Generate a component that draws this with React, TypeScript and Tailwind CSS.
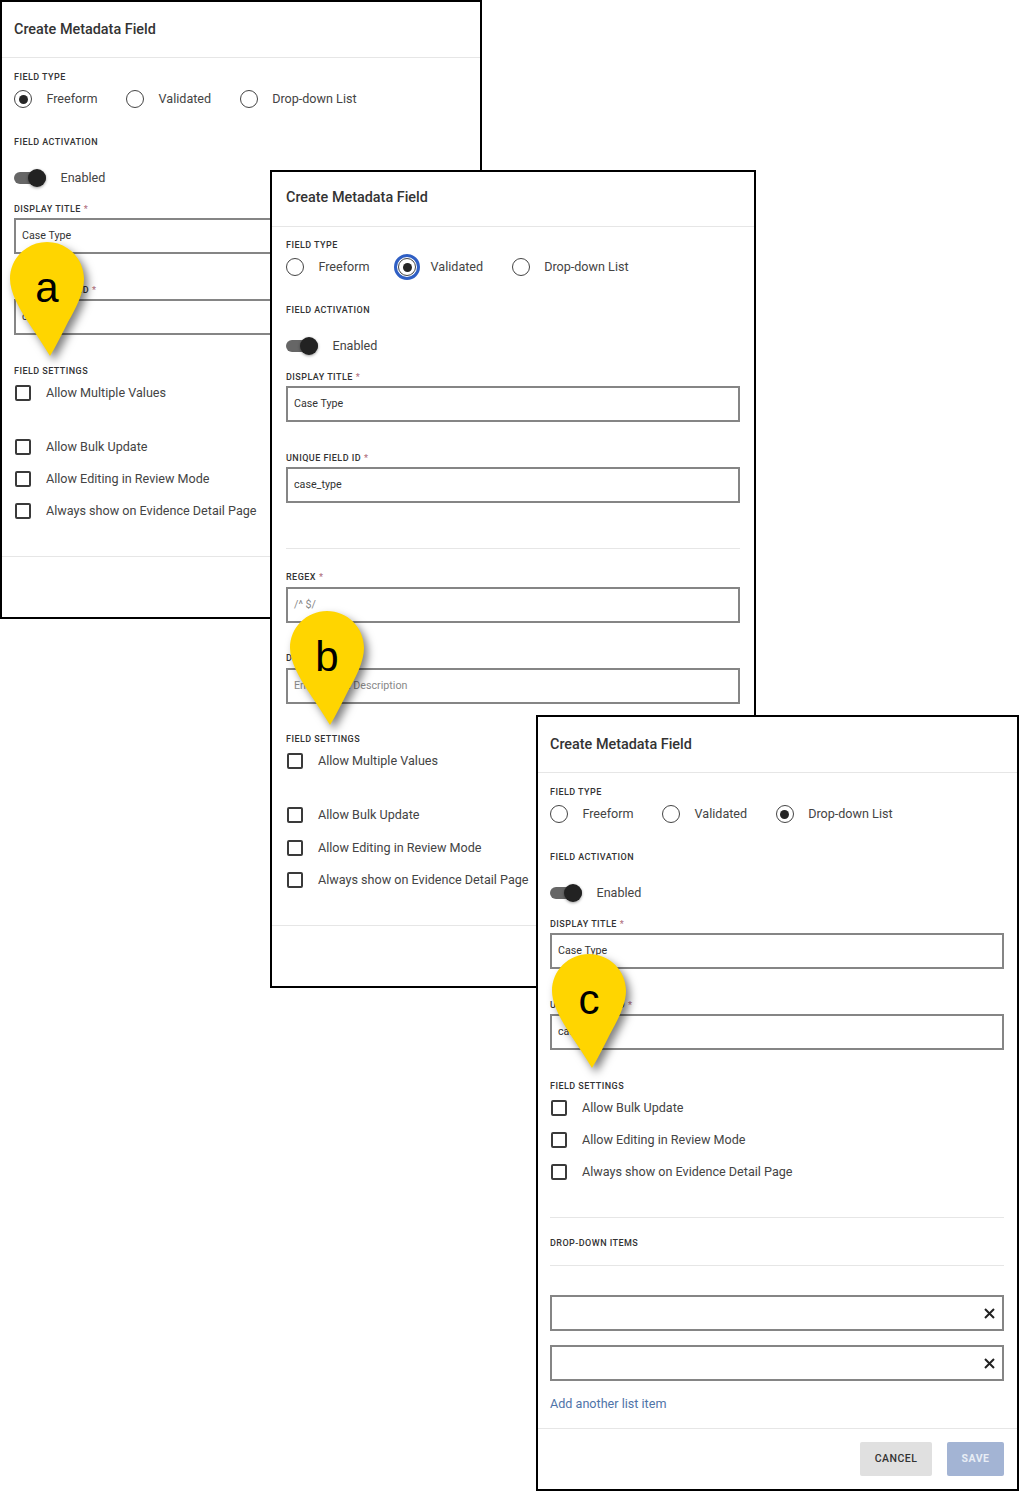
import React from "react";

function Label({ text, req, className = "" }: { text: string; req?: boolean; className?: string }) {
  return (
    <div className={`h-3 flex items-center text-[9px] leading-3 font-medium tracking-[0.45px] text-[#333] uppercase ${className}`}>
      {text}
      {req && <span className="ml-[3px] text-[#b0707e]">*</span>}
    </div>
  );
}

function Radio({ label, checked, focus }: { label: string; checked?: boolean; focus?: boolean }) {
  return (
    <div className="flex items-center h-6">
      <span
        className={`w-[18px] h-[18px] rounded-full border-[1.5px] border-[#444] flex items-center justify-center shrink-0 ${focus ? "outline-[3px] outline-[#2f5fc4] outline-offset-[1px]" : ""}`}
      >
        {checked && <span className="w-[9px] h-[9px] rounded-full bg-[#262626]" />}
      </span>
      <span className="ml-[14.4px] text-[12.6px] text-[#444]">{label}</span>
    </div>
  );
}

function Check({ label, className = "" }: { label: string; className?: string }) {
  return (
    <div className={`flex items-center h-6 ${className}`}>
      <span className="ml-px w-4 h-4 rounded-[2px] border-2 border-[#3a3a3a] shrink-0" />
      <span className="ml-[15px] text-[12.6px] text-[#444] whitespace-nowrap">{label}</span>
    </div>
  );
}

function Input({ value, placeholder, className = "", icon }: { value?: string; placeholder?: string; className?: string; icon?: boolean }) {
  return (
    <div className={`h-9 border-2 border-[#858585] flex items-center justify-between pl-[6px] pr-[7px] text-[10.7px] ${value ? "text-[#333]" : "text-[#888]"} ${className}`}>
      <span>{value ?? placeholder}</span>
      {icon && (
        <svg width="11" height="11" viewBox="0 0 11 11" fill="none" stroke="#222" strokeWidth="2">
          <path d="M1 1 L10 10 M10 1 L1 10" />
        </svg>
      )}
    </div>
  );
}

function Top({ headerClass, labelClass, focus, selected }: { headerClass: string; labelClass: string; focus?: boolean; selected: number }) {
  return (
    <>
      <div className={`flex items-center text-[14.4px] font-medium text-[#333] border-b border-[#e6e6e6] ${headerClass}`}>
        Create Metadata Field
      </div>
      <Label text="Field Type" className={labelClass} />
      <div className="flex gap-[28.6px] mt-1">
        <Radio label="Freeform" checked={selected === 0} />
        <Radio label="Validated" checked={selected === 1} focus={focus} />
        <Radio label="Drop-down List" checked={selected === 2} />
      </div>
      <Label text="Field Activation" className="mt-[25px]" />
      <div className="flex items-center h-6 mt-[18px]">
        <div className="relative w-[32px] h-3 rounded-full bg-[#666] shrink-0">
          <span className="absolute right-0 -top-[3px] w-[18px] h-[18px] rounded-full bg-[#222] shadow-[0_1px_3px_rgba(0,0,0,0.4)]" />
        </div>
        <span className="ml-[14.5px] text-[12.6px] text-[#444]">Enabled</span>
      </div>
      <Label text="Display Title" req className="mt-[13px]" />
      <Input value="Case Type" className="mt-[3px]" />
      <Label text="Unique Field ID" req className="mt-[30px]" />
      <Input value="case_type" className="mt-[3px]" />
    </>
  );
}

function Pin({ letter, left, top }: { letter: string; left: string; top: string }) {
  return (
    <div className={`absolute w-[74px] h-[114px] ${left} ${top}`}>
      <svg width="74" height="114" viewBox="0 0 74 114" className="drop-shadow-[4px_5px_4px_rgba(0,0,0,0.5)] overflow-visible">
        <path d="M37 0 C57.5 0 74 16.5 74 37 C74 50 66 66 58 80 C52 92 46 104 40 114 C34 104 26 92 18 80 C9 66 0 50 0 37 C0 16.5 16.5 0 37 0 Z" fill="#ffd500" />
      </svg>
      <span className="absolute inset-x-0 top-[25px] text-center text-[42px] leading-[42px] text-black font-['Liberation_Sans',sans-serif]">{letter}</span>
    </div>
  );
}

export default function App() {
  return (
    <div className="relative w-[1019px] h-[1491px] bg-white overflow-hidden font-['Roboto',sans-serif]">
      {/* Panel a */}
      <div className="absolute left-0 top-0 w-[482px] h-[619px] border-2 border-black bg-white px-3">
        <Top headerClass="h-[56px] -mx-3 pl-3" labelClass="mt-[13px]" selected={0} />
        <Label text="Field Settings" className="mt-[30px]" />
        <Check label="Allow Multiple Values" className="mt-1" />
        <Check label="Allow Bulk Update" className="mt-[30px]" />
        <Check label="Allow Editing in Review Mode" className="mt-2" />
        <Check label="Always show on Evidence Detail Page" className="mt-2" />
        <div className="border-t border-[#e6e6e6] mt-[33px] -mx-3" />
      </div>

      {/* Panel b */}
      <div className="absolute left-[270px] top-[170px] w-[486px] h-[818px] border-2 border-black bg-white px-[14px]">
        <Top headerClass="h-[55px] -mx-[14px] pl-[14px] pb-[2px]" labelClass="mt-3" focus selected={1} />
        <div className="border-t border-[#e6e6e6] mt-[45px]" />
        <Label text="Regex" req className="mt-[22px]" />
        <Input placeholder="/^ $/" className="mt-1" />
        <Label text="Description" className="mt-[29px]" />
        <Input placeholder="Enter Regex Description" className="mt-1" />
        <Label text="Field Settings" className="mt-[29px]" />
        <Check label="Allow Multiple Values" className="mt-1" />
        <Check label="Allow Bulk Update" className="mt-[30px]" />
        <Check label="Allow Editing in Review Mode" className="mt-[9px]" />
        <Check label="Always show on Evidence Detail Page" className="mt-2" />
        <div className="border-t border-[#e6e6e6] mt-[33px] -mx-[14px]" />
      </div>

      {/* Panel c */}
      <div className="absolute left-[536px] top-[715px] w-[483px] h-[776px] border-2 border-black bg-white pl-3 pr-[13px]">
        <Top headerClass="h-[56px] -ml-3 -mr-[13px] pl-3" labelClass="mt-[13px]" selected={2} />
        <Label text="Field Settings" className="mt-[30px]" />
        <Check label="Allow Bulk Update" className="mt-1" />
        <Check label="Allow Editing in Review Mode" className="mt-2" />
        <Check label="Always show on Evidence Detail Page" className="mt-2" />
        <div className="border-t border-[#e6e6e6] mt-[33px]" />
        <Label text="Drop-down Items" className="mt-[19px]" />
        <div className="border-t border-[#e6e6e6] mt-[16px]" />
        <Input icon className="mt-[29px]" />
        <Input icon className="mt-[14px]" />
        <div className="mt-[15px] h-[17px] flex items-center text-[12.6px] text-[#4f74a8]">Add another list item</div>
        <div className="border-t border-[#e6e6e6] mt-[15px] -ml-3 -mr-[13px]" />
        <div className="flex justify-end gap-[15px] mt-[13px]">
          <div className="w-[72px] h-[34px] rounded-[2px] bg-[#e0e0e0] flex items-center justify-center text-[10.5px] font-medium tracking-[0.5px] text-[#333]">CANCEL</div>
          <div className="w-[57px] h-[34px] rounded-[2px] bg-[#a3b4d4] flex items-center justify-center text-[10.5px] font-bold tracking-[0.5px] text-[#e8edf5]">SAVE</div>
        </div>
      </div>

      <Pin letter="a" left="left-[10px]" top="top-[242px]" />
      <Pin letter="b" left="left-[290px]" top="top-[611px]" />
      <Pin letter="c" left="left-[552px]" top="top-[954px]" />
    </div>
  );
}
